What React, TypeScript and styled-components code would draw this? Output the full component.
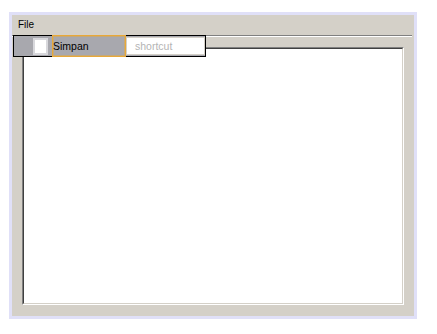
import React from 'react';
import styled, { createGlobalStyle } from 'styled-components';

const GlobalStyle = createGlobalStyle`
  html, body {
    margin: 0;
    padding: 0;
    background: #ffffff;
  }
  body {
    font-family: "Liberation Sans", Arial, sans-serif;
    font-size: 10px;
  }
`;

const Page = styled.div`
  padding: 12px 0 0 9px;
`;

const Frame = styled.div`
  position: relative;
  width: 402px;
  height: 301px;
  border: 3px solid #e0e0f8;
  background: #d4d0c8;
  display: flex;
  flex-direction: column;
`;

const MenuBar = styled.div`
  height: 20px;
  margin-right: 2px;
  border-bottom: 1px solid #808080;
  box-shadow: 0 1px 0 #ffffff;
  display: flex;
  align-items: center;
  padding-left: 6px;
`;

const MenuItem = styled.span`
  color: #000000;
  font-size: 10px;
  line-height: 12px;
`;

const Body = styled.div`
  flex: 1;
  display: flex;
  padding: 11px 10px 11px 10px;
`;

const Sunken = styled.div`
  flex: 1;
  border-top: 1px solid #808080;
  border-left: 1px solid #808080;
  border-right: 1px solid #ffffff;
  border-bottom: 1px solid #ffffff;
  display: flex;
`;

const Canvas = styled.div`
  flex: 1;
  background: #ffffff;
  border-top: 1px solid #404040;
  border-left: 1px solid #404040;
  border-right: 1px solid #d4d0c8;
  border-bottom: 1px solid #d4d0c8;
`;

const Popup = styled.div`
  position: absolute;
  left: 1px;
  top: 20px;
  width: 191px;
  height: 20px;
  border: 1px solid #000000;
  background: #a8a8ae;
  display: flex;
  align-items: stretch;
`;

const CheckCell = styled.div`
  width: 38px;
  display: flex;
  align-items: center;
  justify-content: flex-end;
  padding-right: 4px;
  box-sizing: border-box;
`;

const CheckBox = styled.div`
  width: 11px;
  height: 13px;
  background: #ffffff;
  border: 2px solid #d8d8dc;
`;

const Label = styled.div`
  position: relative;
  z-index: 1;
  width: 74px;
  margin: -1px 0;
  border: 1px solid #e8a838;
  box-shadow: inset 0 0 0 1px rgba(232, 168, 56, 0.45);
  display: flex;
  align-items: center;
  font-size: 10.5px;
  color: #000000;
  box-sizing: border-box;
`;

const ShortcutField = styled.div`
  flex: 1;
  margin: 1px 0 1px 0;
  background: #ffffff;
  border: 1px solid #d4d0c8;
  display: flex;
  align-items: center;
  padding-left: 8px;
  color: #b4b4b4;
  font-size: 10.5px;
`;

export default function App() {
  return (
    <Page>
      <GlobalStyle />
      <Frame>
        <MenuBar>
          <MenuItem>File</MenuItem>
        </MenuBar>
        <Body>
          <Sunken>
            <Canvas />
          </Sunken>
        </Body>
        <Popup>
          <CheckCell>
            <CheckBox />
          </CheckCell>
          <Label>Simpan</Label>
          <ShortcutField>shortcut</ShortcutField>
        </Popup>
      </Frame>
    </Page>
  );
}
